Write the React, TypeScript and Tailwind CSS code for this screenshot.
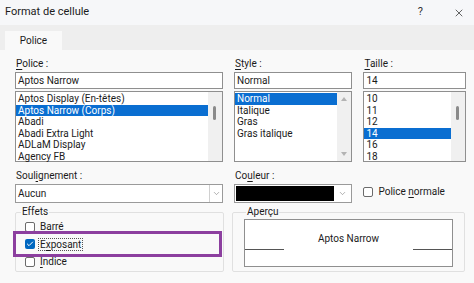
import { Check, ChevronDown, X } from "lucide-react";

const fontItems = [
  "Aptos Display (En-têtes)",
  "Aptos Narrow (Corps)",
  "Abadi",
  "Abadi Extra Light",
  "ADLaM Display",
  "Agency FB",
];
const styleItems = ["Normal", "Italique", "Gras", "Gras italique"];
const sizeItems = ["10", "11", "12", "14", "16", "18"];

function Hotkey({ text, hotkey }: { text: string; hotkey: number }) {
  if (hotkey < 0) {
    return <>{text}</>;
  }
  return (
    <>
      {text.slice(0, hotkey)}
      <span className="underline underline-offset-2">{text[hotkey]}</span>
      {text.slice(hotkey + 1)}
    </>
  );
}

function FieldLabel({ text, hotkey }: { text: string; hotkey: number }) {
  return (
    <div className="mt-[7px] h-[14px] pl-[1px] leading-[14px] text-[#1b1b1b]">
      <Hotkey text={text} hotkey={hotkey} />
    </div>
  );
}

function ListBox({
  items,
  selected,
  scroll,
}: {
  items: string[];
  selected: string;
  scroll: "thumb" | "arrows";
}) {
  return (
    <div className="mt-[2px] flex h-[71px] border border-[#8f8f8f] bg-white">
      <div className="flex flex-1 flex-col pt-[1px]">
        {items.map((item) => (
          <div
            className={
              item === selected
                ? "h-[11.5px] bg-[#0a6ed1] pl-[2px] leading-[11.5px] text-white"
                : "h-[11.5px] pl-[2px] leading-[11.5px] text-[#1b1b1b]"
            }
            key={item}
          >
            {item}
          </div>
        ))}
      </div>
      <div className="relative w-[14px] bg-[#f0f0f0]">
        {scroll === "thumb" ? (
          <div className="absolute left-[5px] top-[14px] h-[14px] w-[3px] rounded-full bg-[#8a8a8a]" />
        ) : (
          <>
            <div className="absolute left-[4px] top-[5px] h-0 w-0 border-x-[3px] border-b-[4px] border-x-transparent border-b-[#b3b3b3]" />
            <div className="absolute bottom-[5px] left-[4px] h-0 w-0 border-x-[3px] border-t-[4px] border-x-transparent border-t-[#b3b3b3]" />
          </>
        )}
      </div>
    </div>
  );
}

function CheckRow({ label, checked, hotkey }: { label: string; checked?: boolean; hotkey: number }) {
  return (
    <div className="flex h-[17.5px] items-center gap-[3px]">
      <div
        className={
          checked
            ? "flex h-[10px] w-[10px] items-center justify-center rounded-[2px] bg-[#0067c0]"
            : "h-[10px] w-[10px] rounded-[2px] border border-[#6b6b6b] bg-white"
        }
      >
        {checked ? <Check className="h-[8px] w-[8px] text-white" strokeWidth={3} /> : null}
      </div>
      <span
        className={
          checked
            ? "border border-dotted border-[#555] px-[1px] leading-[11px] text-[#1b1b1b]"
            : "px-[2px] text-[#1b1b1b]"
        }
      >
        <Hotkey text={label} hotkey={hotkey} />
      </span>
    </div>
  );
}

export default function App() {
  return (
    <div
      className="relative h-[283px] w-[474px] overflow-hidden bg-[#f9f9f9] text-[10px]"
      style={{ fontFamily: 'Roboto, "Noto Sans", sans-serif' }}
    >
      <div className="flex h-[25px] items-center bg-[#f6f7f9] pl-[5px] pr-[9px] text-[11px] text-[#1b1b1b]">
        <span className="flex-1">Format de cellule</span>
        <span className="mr-[30px] text-[11px] text-[#333]">?</span>
        <X className="h-[12px] w-[12px] text-[#333]" strokeWidth={1.5} />
      </div>

      <div className="flex h-[25px] items-end bg-[#eeeeee] pl-[5px]">
        <div className="flex h-[19px] w-[57px] items-center justify-center bg-[#f9f9f9] text-[#1b1b1b]">
          Police
        </div>
      </div>

      <div className="flex gap-[11px] pl-[15px] pr-[8px]">
        <div className="flex w-[209px] flex-col">
          <FieldLabel text="Police :" hotkey={0} />
          <div className="mt-[1px] flex h-[17px] items-center border border-[#8f8f8f] bg-white pl-[2px] text-[#1b1b1b]">
            Aptos Narrow
          </div>
          <ListBox items={fontItems} selected="Aptos Narrow (Corps)" scroll="thumb" />
          <FieldLabel text="Soulignement :" hotkey={4} />
          <div className="mt-[1px] flex h-[19px] items-center border border-[#9a9a9a] bg-white pl-[2px] text-[#1b1b1b]">
            <span className="flex-1">Aucun</span>
            <div className="flex h-full w-[13px] items-center justify-center border-l border-[#d0d0d0]">
              <ChevronDown className="h-[9px] w-[9px] text-[#777]" strokeWidth={1.5} />
            </div>
          </div>
        </div>

        <div className="flex w-[119px] flex-col">
          <FieldLabel text="Style :" hotkey={0} />
          <div className="mt-[1px] flex h-[17px] items-center border border-[#8f8f8f] bg-white pl-[2px] text-[#1b1b1b]">
            Normal
          </div>
          <ListBox items={styleItems} selected="Normal" scroll="arrows" />
          <FieldLabel text="Couleur :" hotkey={2} />
          <div className="mt-[1px] flex h-[19px] items-center border border-[#9a9a9a] bg-white p-[1px]">
            <div className="h-full flex-1 bg-black" />
            <div className="flex h-full w-[16px] items-center justify-center">
              <ChevronDown className="h-[9px] w-[9px] text-[#777]" strokeWidth={1.5} />
            </div>
          </div>
        </div>

        <div className="flex w-[103px] flex-col">
          <FieldLabel text="Taille :" hotkey={0} />
          <div className="mt-[1px] flex h-[17px] items-center border border-[#8f8f8f] bg-white pl-[2px] text-[#1b1b1b]">
            14
          </div>
          <ListBox items={sizeItems} selected="14" scroll="thumb" />
          <div className="mt-[22px] flex items-center gap-[5px]">
            <div className="h-[10px] w-[10px] rounded-[2px] border border-[#6b6b6b] bg-white" />
            <span className="text-[#1b1b1b]">
              Police <span className="underline underline-offset-2">n</span>ormale
            </span>
          </div>
        </div>
      </div>

      <div className="mt-[3px] flex gap-[8px] pl-[15px] pr-[9px]">
        <fieldset className="h-[66px] w-[209px] rounded-[2px] border border-[#e0e0e0] pl-[9px]">
          <legend className="ml-[-4px] px-[1px] leading-[12px] text-[#1b1b1b]">Effets</legend>
          <CheckRow label="Barré" hotkey={-1} />
          <CheckRow label="Exposant" hotkey={1} checked />
          <CheckRow label="Indice" hotkey={0} />
        </fieldset>
        <fieldset className="h-[66px] flex-1 rounded-[2px] border border-[#e0e0e0] px-[11px] pt-[1px]">
          <legend className="ml-[2px] px-[1px] leading-[12px] text-[#1b1b1b]">Aperçu</legend>
          <div className="flex h-[48px] flex-col border border-[#8f8f8f] bg-white">
            <div className="flex h-[29px] items-end justify-center pb-[3px] text-[#1b1b1b]">Aptos Narrow</div>
            <div className="flex h-[1px] justify-between">
              <div className="w-[39px] bg-[#555]" />
              <div className="w-[39px] bg-[#555]" />
            </div>
          </div>
        </fieldset>
      </div>

      <div className="absolute left-[13px] top-[231px] h-[26px] w-[209px] border-[3px] border-[#8c3f9f]" />
    </div>
  );
}
